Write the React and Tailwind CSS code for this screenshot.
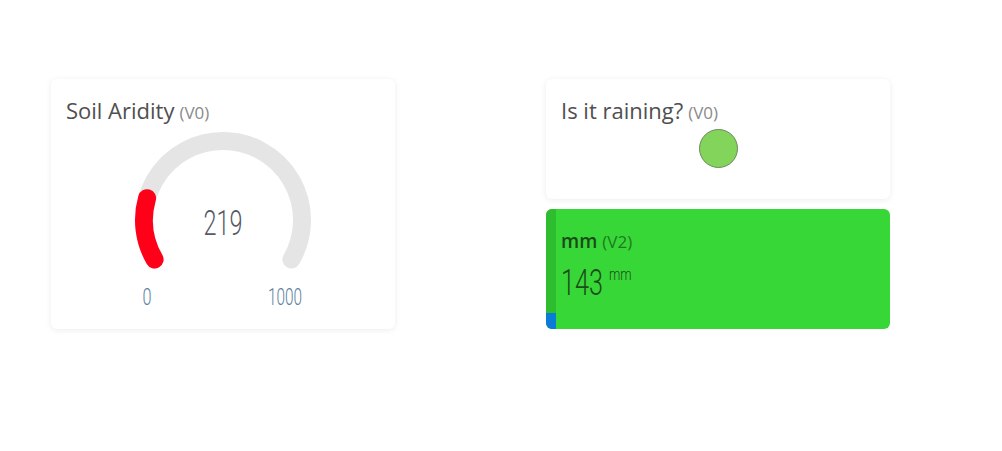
const Gauge = ({ value, min, max }) => {
  const cx = 172;
  const cy = 93;
  const r = 79;
  const pt = (deg) => {
    const a = (deg * Math.PI) / 180;
    return [cx + r * Math.cos(a), cy - r * Math.sin(a)];
  };
  const [sx, sy] = pt(210);
  const [ex, ey] = pt(-30);
  const [vx, vy] = pt(210 - 46);

  return (
    <svg width="344" height="193" viewBox="0 0 344 193" className="block">
      <path
        d={`M ${sx} ${sy} A ${r} ${r} 0 1 1 ${ex} ${ey}`}
        fill="none"
        stroke="#e5e5e5"
        strokeWidth="18"
        strokeLinecap="round"
      />
      <path
        d={`M ${sx} ${sy} A ${r} ${r} 0 0 1 ${vx} ${vy}`}
        fill="none"
        stroke="#ff0019"
        strokeWidth="18"
        strokeLinecap="round"
      />
      <text
        x={cx}
        y="108"
        textAnchor="middle"
        fontFamily="Roboto, sans-serif"
        fontWeight="300"
        fontSize="35"
        fill="#555a66"
        textLength="39"
        lengthAdjust="spacingAndGlyphs"
      >
        {value}
      </text>
      <text
        x="96"
        y="178"
        textAnchor="middle"
        fontFamily="Roboto, sans-serif"
        fontWeight="300"
        fontSize="23"
        fill="#5b7f9e"
        textLength="9"
        lengthAdjust="spacingAndGlyphs"
      >
        {min}
      </text>
      <text
        x="234"
        y="178"
        textAnchor="middle"
        fontFamily="Roboto, sans-serif"
        fontWeight="300"
        fontSize="23"
        fill="#5b7f9e"
        textLength="34"
        lengthAdjust="spacingAndGlyphs"
      >
        {max}
      </text>
    </svg>
  );
};

const App = () => {
  return (
    <div className="w-[1002px] h-[451px] bg-white flex items-start gap-[151px] pl-[51px] pt-[79px] font-['Open_Sans',sans-serif]">
      {/* Soil aridity gauge */}
      <div className="w-[344px] h-[250px] bg-white rounded-md shadow-[0_1px_6px_rgba(0,0,0,0.08)]">
        <div className="pt-[15px] pl-[15px] h-[48px] flex items-baseline gap-[5px]">
          <span className="text-[22px] text-[#4f4f4f]">Soil Aridity</span>
          <span className="text-[17px] text-[#8a8a8a]">(V0)</span>
        </div>
        <Gauge value={219} min={0} max={1000} />
      </div>

      <div className="flex flex-col gap-[10px]">
        {/* Rain LED */}
        <div className="w-[344px] h-[120px] bg-white rounded-md shadow-[0_1px_6px_rgba(0,0,0,0.08)]">
          <div className="pt-[15px] pl-[15px] flex items-baseline gap-[5px]">
            <span className="text-[22px] text-[#4f4f4f]">Is it raining?</span>
            <span className="text-[17px] text-[#8a8a8a]">(V0)</span>
          </div>
          <div className="flex justify-center mt-[2px]">
            <div className="w-[39px] h-[39px] rounded-full bg-[#82d45a] border border-[#6c8a5c]"></div>
          </div>
        </div>

        {/* Value display */}
        <div className="w-[344px] h-[120px] bg-[#38d738] rounded-md overflow-hidden flex">
          <div className="w-[10px] flex flex-col">
            <div className="flex-1 bg-[#2ebd2e]"></div>
            <div className="h-[16px] bg-[#0a7bd6]"></div>
          </div>
          <div className="pl-[5px]">
            <div className="pt-[18px] flex items-baseline gap-[5px]">
              <span className="text-[19px] font-semibold text-[#1a4a1a]">mm</span>
              <span className="text-[17px] text-[#217a21]">(V2)</span>
            </div>
            <div className="flex items-start mt-[5px] font-['Roboto',sans-serif] font-light text-[#1b4d1b]">
              <span className="inline-block text-[36px] leading-[44px] origin-left scale-x-[0.7] w-[48px]">
                143
              </span>
              <span className="inline-block text-[17px] leading-[20px] mt-[3px] origin-left scale-x-[0.75]">
                mm
              </span>
            </div>
          </div>
        </div>
      </div>
    </div>
  );
};

export default App;
